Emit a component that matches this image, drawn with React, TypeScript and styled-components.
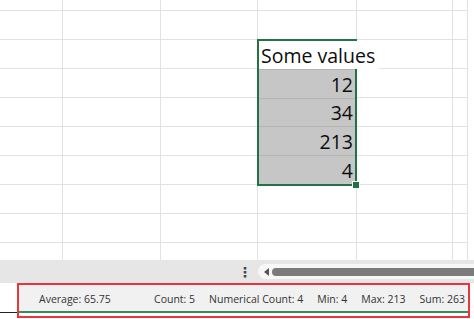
import * as React from 'react';
import styled, { createGlobalStyle } from 'styled-components';

const COLS = [63, 98, 97, 99, 96, 15];
const ROW_COUNT = 9;
const values = ['12', '34', '213', '4'];

const stats = [
  'Count: 5',
  'Numerical Count: 4',
  'Min: 4',
  'Max: 213',
  'Sum: 263',
];

export default function App() {
  const cells: React.ReactNode[] = [];
  for (let r = 0; r < ROW_COUNT + 1; r++) {
    for (let c = 0; c < COLS.length + 1; c++) {
      cells.push(
        <Cell
          key={`${r}-${c}`}
          $row={r + 1}
          $col={c + 1}
          $noRight={c === COLS.length}
          $noBottom={r === ROW_COUNT || c === COLS.length}
        />
      );
    }
  }

  return (
    <>
      <GlobalStyle />
      <Window>
        <Sheet>
          {cells}
          <Selection>
            <ActiveCell>Some values</ActiveCell>
            {values.map((v) => (
              <ValueCell key={v}>{v}</ValueCell>
            ))}
            <FillHandle />
          </Selection>
        </Sheet>
        <SheetBar>
          <Dots>⋮</Dots>
          <ScrollTrack>
            <ScrollArrow />
            <ScrollThumb />
          </ScrollTrack>
        </SheetBar>
        <StatusRow>
          <TabStub />
          <StatusBox>
            <StatusInner>
              <StatLead>Average: 65.75</StatLead>
              {stats.map((s) => (
                <Stat key={s}>{s}</Stat>
              ))}
            </StatusInner>
          </StatusBox>
          <RightGap />
        </StatusRow>
      </Window>
    </>
  );
}

const GlobalStyle = createGlobalStyle`
  html, body {
    margin: 0;
    padding: 0;
    background: #ffffff;
  }
  body {
    font-family: "Open Sans", "Noto Sans", sans-serif;
  }
`;

const Window = styled.div`
  width: 474px;
  height: 319px;
  display: flex;
  flex-direction: column;
  overflow: hidden;
  background: #ffffff;
`;

const Sheet = styled.div`
  display: grid;
  grid-template-columns: ${COLS.map((w) => `${w}px`).join(' ')} 1fr;
  grid-template-rows: 11px repeat(8, 29px) 1fr;
  height: 260px;
  flex-shrink: 0;
  overflow: hidden;
`;

const Cell = styled.div<{
  $row: number;
  $col: number;
  $noRight?: boolean;
  $noBottom?: boolean;
}>`
  grid-row: ${(p) => p.$row};
  grid-column: ${(p) => p.$col};
  box-sizing: border-box;
  border-right: ${(p) => (p.$noRight ? 'none' : '1px solid #e2e2e2')};
  border-bottom: ${(p) => (p.$noBottom ? 'none' : '1px solid #e2e2e2')};
`;

const Selection = styled.div`
  grid-column: 4;
  grid-row: 3 / span 5;
  position: relative;
  margin: -1px 0 -1px -1px;
  border: 2px solid #217346;
  display: flex;
  flex-direction: column;
  font-family: "Open Sans", "Noto Sans", sans-serif;
  font-size: 19.5px;
  color: #0d0d0d;
`;

const ActiveCell = styled.div`
  flex: 1;
  display: flex;
  align-items: flex-end;
  padding: 0 0 1px 2px;
  white-space: nowrap;
  background: #ffffff;
  line-height: 24px;
  position: relative;
  z-index: 1;
  margin-right: -24px;
`;

const ValueCell = styled.div`
  flex: 1;
  display: flex;
  align-items: flex-end;
  justify-content: flex-end;
  padding: 0 2px 1px 0;
  background: #c6c6c6;
  border-top: 1px solid #b4b4b4;
  line-height: 24px;
`;

const FillHandle = styled.span`
  position: absolute;
  right: -5px;
  bottom: -5px;
  width: 6px;
  height: 6px;
  background: #217346;
  border: 1px solid #ffffff;
`;

const SheetBar = styled.div`
  height: 23px;
  flex-shrink: 0;
  background: #e6e6e6;
  display: flex;
  align-items: center;
  padding-left: 238px;
`;

const Dots = styled.span`
  width: 20px;
  font-size: 14px;
  line-height: 14px;
  color: #444444;
  font-weight: 700;
  font-family: "DejaVu Sans", sans-serif;
`;

const ScrollTrack = styled.div`
  flex: 1;
  height: 15px;
  background: #f7f7f7;
  border-radius: 8px 0 0 8px;
  display: flex;
  align-items: center;
  padding-left: 6px;
  gap: 3px;
`;

const ScrollArrow = styled.span`
  width: 0;
  height: 0;
  border-top: 4px solid transparent;
  border-bottom: 4px solid transparent;
  border-right: 5px solid #555555;
`;

const ScrollThumb = styled.span`
  flex: 1;
  height: 8px;
  background: #7b7b7b;
  border-radius: 4px 0 0 4px;
`;

const StatusRow = styled.div`
  flex: 1;
  display: flex;
`;

const TabStub = styled.div`
  width: 17px;
  background: #ffffff;
  border-bottom: 1px solid #222222;
  margin-bottom: 6px;
`;

const StatusBox = styled.div`
  flex: 1;
  border: 2px solid #e8363c;
  background: #ffffff;
  display: flex;
  flex-direction: column;
  margin-bottom: 1px;
`;

const StatusInner = styled.div`
  flex: 1;
  display: flex;
  align-items: center;
  gap: 14px;
  padding: 1px 3px 0 20px;
  background: #f1f1f1;
  border-bottom: 2px solid #3b8a5e;
  margin-bottom: 3px;
  font-family: "Open Sans", "Noto Sans", sans-serif;
  font-size: 10.5px;
  color: #333333;
  white-space: nowrap;
`;

const Stat = styled.span``;

const StatLead = styled.span`
  margin-right: auto;
`;

const RightGap = styled.div`
  width: 4px;
`;
